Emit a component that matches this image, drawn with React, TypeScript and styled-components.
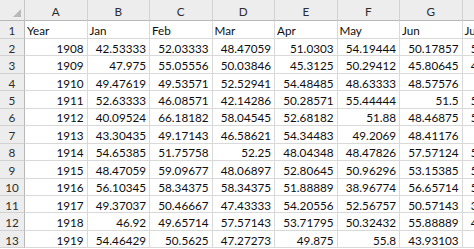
import React from "react";
import styled, { createGlobalStyle } from "styled-components";

const Global = createGlobalStyle`
  html, body { margin: 0; padding: 0; background: #ffffff; }
  body { font-family: Lato, "Liberation Sans", sans-serif; }
`;

const Sheet = styled.div`
  width: 474px;
  height: 249px;
  overflow: hidden;
  background: #ffffff;
`;

const Grid = styled.div`
  display: grid;
  grid-template-columns: 25px repeat(8, 62.5px);
  grid-template-rows: 21px 18px repeat(12, 17.45px);
  width: 525px;
  font-family: Lato, "Liberation Sans", sans-serif;
  font-size: 11.7px;
`;

const Corner = styled.div`
  position: relative;
  background: #ededed;
  border-right: 1px solid #c8c8c8;
  border-bottom: 1px solid #b8b8b8;
  box-sizing: border-box;
`;

const CornerTriangle = styled.div`
  position: absolute;
  right: 3px;
  bottom: 3px;
  width: 0;
  height: 0;
  border-left: 8px solid transparent;
  border-bottom: 8px solid #b9b9b9;
`;

const ColHeader = styled.div`
  background: #ededed;
  border-right: 1px solid #d2d2d2;
  border-bottom: 1px solid #b8b8b8;
  box-sizing: border-box;
  display: flex;
  align-items: center;
  justify-content: center;
  color: #2e2e2e;
  padding-top: 1px;
`;

const RowHeader = styled.div`
  background: #ededed;
  border-right: 1px solid #b8b8b8;
  border-bottom: 1px solid #d2d2d2;
  box-sizing: border-box;
  display: flex;
  align-items: center;
  justify-content: center;
  color: #2e2e2e;
  padding-top: 1px;
`;

const Cell = styled.div<{ $num?: boolean }>`
  border-right: 1px solid #d9d9d9;
  border-bottom: 1px solid #d9d9d9;
  box-sizing: border-box;
  display: flex;
  align-items: center;
  justify-content: ${(p) => (p.$num ? "flex-end" : "flex-start")};
  padding: 1px 3px 0 2px;
  color: #0e0e0e;
  white-space: nowrap;
  overflow: hidden;
`;

const columns = ["A", "B", "C", "D", "E", "F", "G", "H"];

const header = ["Year", "Jan", "Feb", "Mar", "Apr", "May", "Jun", "Jul"];

const data: (string | number)[][] = [
  [1908, "42.53333", "52.03333", "48.47059", "51.0303", "54.19444", "50.17857", "53.21429"],
  [1909, "47.975", "55.05556", "50.03846", "45.3125", "50.29412", "45.80645", "46.51613"],
  [1910, "49.47619", "49.53571", "52.52941", "54.48485", "48.63333", "48.57576", "47.1"],
  [1911, "52.63333", "46.08571", "42.14286", "50.28571", "55.44444", "51.5", "55.12903"],
  [1912, "40.09524", "66.18182", "58.04545", "52.68182", "51.88", "48.46875", "54.70968"],
  [1913, "43.30435", "49.17143", "46.58621", "54.34483", "49.2069", "48.41176", "49.25"],
  [1914, "54.65385", "51.75758", "52.25", "48.04348", "48.47826", "57.57124", "51.83871"],
  [1915, "48.47059", "59.09677", "48.06897", "52.80645", "50.96296", "53.15385", "52.58065"],
  [1916, "56.10345", "58.34375", "58.34375", "51.88889", "38.96774", "56.65714", "55.41935"],
  [1917, "49.37037", "50.46667", "47.43333", "54.20556", "52.56757", "50.57143", "39.67742"],
  [1918, "46.92", "49.65714", "57.57143", "53.71795", "50.32432", "55.88889", "48.12903"],
  [1919, "54.46429", "50.5625", "47.27273", "49.875", "55.8", "43.93103", "47.3"],
];

export default function App() {
  return (
    <>
      <Global />
      <Sheet>
        <Grid>
          <Corner>
            <CornerTriangle />
          </Corner>
          {columns.map((c) => (
            <ColHeader key={c}>{c}</ColHeader>
          ))}
          <RowHeader>1</RowHeader>
          {header.map((h) => (
            <Cell key={h}>{h}</Cell>
          ))}
          {data.map((row, i) => (
            <React.Fragment key={i}>
              <RowHeader>{i + 2}</RowHeader>
              {row.map((v, j) => (
                <Cell key={j} $num>
                  {v}
                </Cell>
              ))}
            </React.Fragment>
          ))}
        </Grid>
      </Sheet>
    </>
  );
}
